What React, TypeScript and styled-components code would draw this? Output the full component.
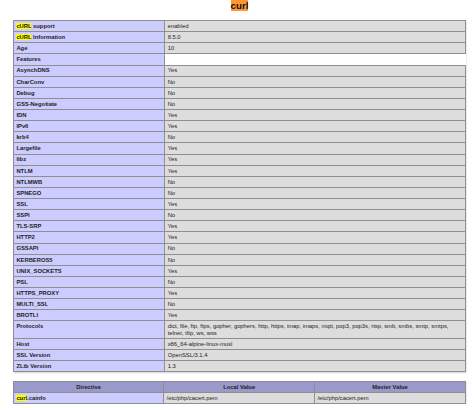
import React from "react";
import styled, { createGlobalStyle } from "styled-components";

const GlobalStyle = createGlobalStyle`
  html, body { margin: 0; padding: 0; background: #fff; }
  body {
    color: #222;
    font-family: "Liberation Sans", Arial, sans-serif;
  }
`;

const Page = styled.div`
  width: 453px;
  padding-left: 13px;
  display: flex;
  flex-direction: column;
`;

const Title = styled.h2`
  margin: 0 0 9px;
  font-size: 9.7px;
  line-height: 11px;
  font-weight: bold;
  text-align: center;
  color: #222;
`;

const Found = styled.span<{ $active?: boolean }>`
  background: ${(p) => (p.$active ? "#ff9632" : "#ffff00")};
  color: #111;
`;

const Table = styled.table<{ $gap?: number }>`
  width: 453px;
  border-collapse: collapse;
  border: 0;
  margin-top: ${(p) => p.$gap ?? 0}px;
  box-shadow: 0.5px 1px 1.5px #ccc;
`;

const Cell = styled.td<{ $kind: "e" | "v" }>`
  border: 1px solid #8f8f8f;
  font-size: 5.82px;
  line-height: 6.35px;
  padding: 1.9px 2.4px;
  vertical-align: baseline;
  text-align: left;
  color: #222;
  background: ${(p) => (p.$kind === "e" ? "#ccccff" : "#dddddd")};
  font-weight: ${(p) => (p.$kind === "e" ? "bold" : "normal")};
  width: ${(p) => (p.$kind === "e" ? "145.5px" : "auto")};
`;

const HeadRow = styled.tr`
  background: #9999cc;
`;

const Head = styled.th<{ $w: string }>`
  border: 1px solid #8f8f8f;
  font-size: 5.82px;
  line-height: 6.35px;
  padding: 1.9px 2.4px;
  vertical-align: baseline;
  text-align: center;
  font-weight: bold;
  color: #222;
  width: ${(p) => p.$w};
`;

type Row = [React.ReactNode, string | null];

const rows: Row[] = [
  [<><Found>cURL</Found> support</>, "enabled"],
  [<><Found>cURL</Found> Information</>, "8.5.0"],
  ["Age", "10"],
  ["Features", null],
  ["AsynchDNS", "Yes"],
  ["CharConv", "No"],
  ["Debug", "No"],
  ["GSS-Negotiate", "No"],
  ["IDN", "Yes"],
  ["IPv6", "Yes"],
  ["krb4", "No"],
  ["Largefile", "Yes"],
  ["libz", "Yes"],
  ["NTLM", "Yes"],
  ["NTLMWB", "No"],
  ["SPNEGO", "No"],
  ["SSL", "Yes"],
  ["SSPI", "No"],
  ["TLS-SRP", "Yes"],
  ["HTTP2", "Yes"],
  ["GSSAPI", "No"],
  ["KERBEROS5", "No"],
  ["UNIX_SOCKETS", "Yes"],
  ["PSL", "No"],
  ["HTTPS_PROXY", "Yes"],
  ["MULTI_SSL", "No"],
  ["BROTLI", "Yes"],
  [
    "Protocols",
    "dict, file, ftp, ftps, gopher, gophers, http, https, imap, imaps, mqtt, pop3, pop3s, rtsp, smb, smbs, smtp, smtps, telnet, tftp, ws, wss",
  ],
  ["Host", "x86_64-alpine-linux-musl"],
  ["SSL Version", "OpenSSL/3.1.4"],
  ["ZLib Version", "1.3"],
];

export default function App() {
  return (
    <>
      <GlobalStyle />
      <Page>
        <Title>
          <Found $active>curl</Found>
        </Title>
        <Table>
          <tbody>
            {rows.map(([k, v], i) => (
              <tr key={i}>
                <Cell $kind="e">{k}</Cell>
                {v !== null && <Cell $kind="v">{v}</Cell>}
              </tr>
            ))}
          </tbody>
        </Table>
        <Table $gap={9}>
          <tbody>
            <HeadRow>
              <Head $w="145.5px">Directive</Head>
              <Head $w="146px">Local Value</Head>
              <Head $w="146px">Master Value</Head>
            </HeadRow>
            <tr>
              <Cell $kind="e">
                <Found>curl</Found>.cainfo
              </Cell>
              <Cell $kind="v">/etc/php/cacert.pem</Cell>
              <Cell $kind="v">/etc/php/cacert.pem</Cell>
            </tr>
          </tbody>
        </Table>
      </Page>
    </>
  );
}
